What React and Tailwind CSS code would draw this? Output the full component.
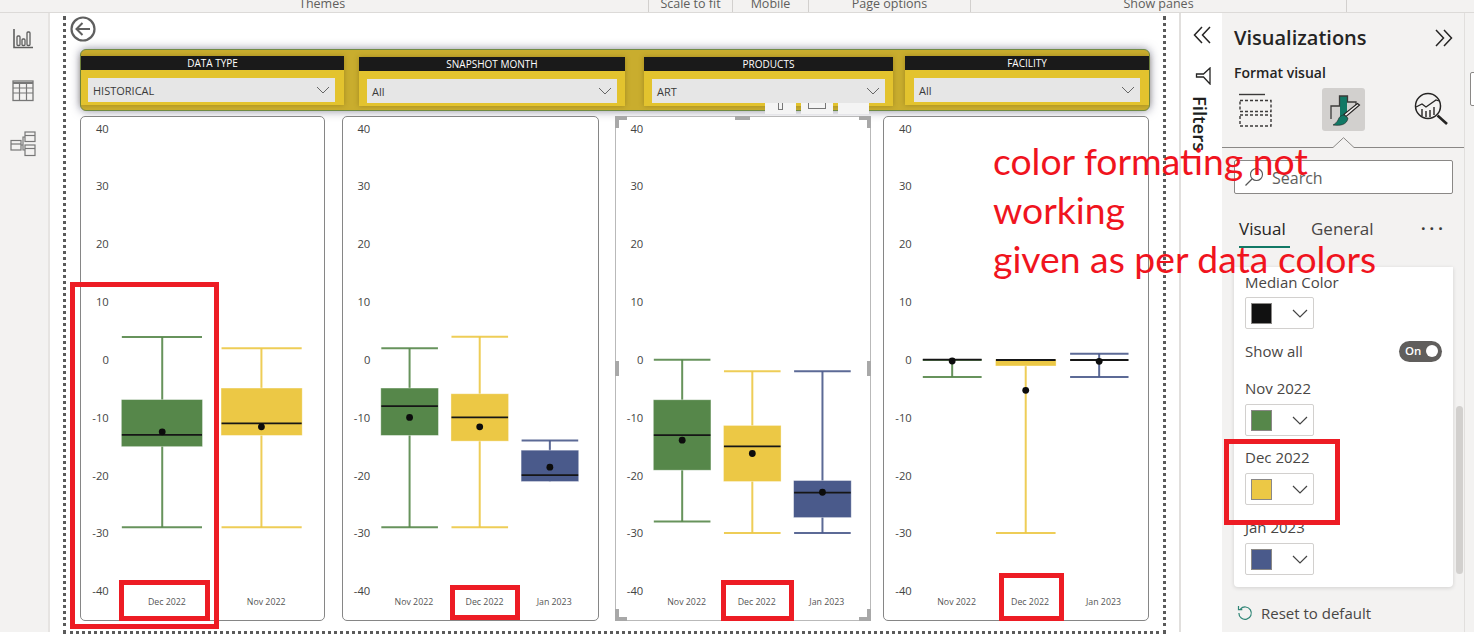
import React from "react";

const GREEN = "#56874a";
const YELLOW = "#ecc845";
const BLUE = "#4a5a8b";

const Y_TICKS = [40, 30, 20, 10, 0, -10, -20, -30, -40];
const yOf = (v) => 359.5 - v * 5.77;

const PANELS = [
  {
    x: 80, w: 245, axisX: 109,
    items: [
      { c: GREEN, cx: 162.3, x1: 122, x2: 202, top: 337, bottom: 527, b1: 399.5, b2: 446.5, med: 434.7, dot: 431.7, label: "Dec 2022", lx: 167 },
      { c: YELLOW, cx: 261.3, x1: 221.5, x2: 301.5, top: 348.3, bottom: 527, b1: 388, b2: 435.3, med: 423.3, dot: 426.7, label: "Nov 2022", lx: 266 },
    ],
  },
  {
    x: 342, w: 257, axisX: 370.5,
    items: [
      { c: GREEN, cx: 409.7, x1: 381.5, x2: 438, top: 348.3, bottom: 527, b1: 388, b2: 435.3, med: 406, dot: 417.3, label: "Nov 2022", lx: 414 },
      { c: YELLOW, cx: 479.7, x1: 451.5, x2: 508, top: 336.7, bottom: 527, b1: 393.7, b2: 441, med: 417.3, dot: 426.7, label: "Dec 2022", lx: 484.5 },
      { c: BLUE, cx: 549.7, x1: 521.5, x2: 578, top: 440.3, b1: 450, b2: 481.3, med: 475, dot: 467, label: "Jan 2023", lx: 554 },
    ],
  },
  {
    x: 615, w: 256, axisX: 643.5, selected: true,
    items: [
      { c: GREEN, cx: 682.3, x1: 654, x2: 710.5, top: 359.7, bottom: 521.3, b1: 399.7, b2: 470, med: 435, dot: 440, label: "Nov 2022", lx: 686.7 },
      { c: YELLOW, cx: 752.3, x1: 724, x2: 780.5, top: 371.3, bottom: 532.7, b1: 425.3, b2: 481.3, med: 446.3, dot: 453.3, label: "Dec 2022", lx: 756.7 },
      { c: BLUE, cx: 822.3, x1: 794, x2: 850.5, top: 371.3, bottom: 532.7, b1: 480.3, b2: 517.3, med: 492.3, dot: 492, label: "Jan 2023", lx: 826.7 },
    ],
  },
  {
    x: 883, w: 266, axisX: 912,
    items: [
      { c: GREEN, cx: 952.3, x1: 923, x2: 981.7, top: 360, bottom: 377, med: 359.7, dot: 361, label: "Nov 2022", lx: 956.7 },
      { c: YELLOW, cx: 1025.7, x1: 996, x2: 1055.5, top: 360, bottom: 532.7, b1: 359.3, b2: 366, med: 360, dot: 390.3, label: "Dec 2022", lx: 1030 },
      { c: BLUE, cx: 1099, x1: 1070, x2: 1128.3, top: 353.7, bottom: 377, med: 360, dot: 361.3, label: "Jan 2023", lx: 1103.3 },
    ],
  },
];

function Box({ d }) {
  const hasBox = d.b1 !== undefined;
  const low = d.bottom ?? d.b2;
  return (
    <g>
      <line x1={d.cx} x2={d.cx} y1={d.top} y2={low} stroke={d.c} strokeWidth="2" strokeOpacity="0.9" />
      <line x1={d.x1} x2={d.x2} y1={d.top} y2={d.top} stroke={d.c} strokeWidth="2" strokeOpacity="0.9" />
      {d.bottom !== undefined && <line x1={d.x1} x2={d.x2} y1={d.bottom} y2={d.bottom} stroke={d.c} strokeWidth="2" strokeOpacity="0.9" />}
      {hasBox && (
        <rect x={d.x1 - 0.5} y={d.b1} width={d.x2 - d.x1 + 1} height={d.b2 - d.b1} fill={d.c} stroke="#fff" strokeOpacity="0.45" strokeWidth="0.8" />
      )}
      <line x1={d.x1} x2={d.x2} y1={d.med} y2={d.med} stroke="#161616" strokeWidth="1.8" />
      <circle cx={d.cx} cy={d.dot} r="3.4" fill="#0c0c0c" />
      <text x={d.lx} y="605" textAnchor="middle" fontSize="8.8" fill="#555" fontFamily="'Open Sans', sans-serif">
        {d.label}
      </text>
    </g>
  );
}

function ChartPanel({ p }) {
  const border = p.selected ? "border-[#b9b9b9]" : "border-[#868686]";
  return (
    <div className={`relative box-border h-[505px] shrink-0 rounded-[5px] border-[1.5px] bg-white ${border}`} style={{ width: p.w }}>
      <svg className="block h-full w-full" viewBox={`${p.x + 1.5} 117.5 ${p.w - 3} 502`}>
        {Y_TICKS.map((t) => (
          <text key={t} x={p.axisX} y={yOf(t) + 4.4} textAnchor="end" fontSize="11.2" fill="#444" fontFamily="'Open Sans', sans-serif">
            {t}
          </text>
        ))}
        {p.items.map((d) => (
          <Box key={d.label} d={d} />
        ))}
      </svg>
    </div>
  );
}

function Slicer({ title, value, className, ddClass = "mx-2" }) {
  return (
    <div className={`shrink-0 bg-[#e3c32e] pb-[3px] shadow-[0_0_5px_rgba(90,70,0,0.35)] ${className}`}>
      <div className="flex h-[14px] items-center justify-center bg-[#1a1a1a] text-[10px] leading-none text-white">{title}</div>
      <div className={`mt-2 flex h-[24px] items-center justify-between bg-[#e6e6e6] pl-[5px] pr-[4px] text-[11px] text-[#3a3a3a] ${ddClass}`}>
        <span className="pt-[3px]">{value}</span>
        <svg width="14" height="8" viewBox="0 0 14 8" className="mr-[1px]">
          <polyline points="1,1 7,7 13,1" fill="none" stroke="#666" strokeWidth="1" />
        </svg>
      </div>
    </div>
  );
}

function ColorPicker({ color, className = "" }) {
  return (
    <div className={`flex h-[32px] w-[69px] items-center rounded-[2px] border border-[#d2d0ce] bg-white pl-[5px] ${className}`}>
      <div className="h-[21px] w-[21px] border border-[#8a8886]" style={{ background: color }} />
      <svg width="16" height="9" viewBox="0 0 16 9" className="ml-[20px]">
        <polyline points="1,1 8,8 15,1" fill="none" stroke="#444" strokeWidth="1.2" />
      </svg>
    </div>
  );
}

function RedBox({ className }) {
  return <div className={`pointer-events-none absolute box-border border-[5px] border-[#ed1c24] ${className}`} />;
}

function Handle({ className }) {
  return <div className={`absolute bg-[#a8a8a8] ${className}`} />;
}

export default function App() {
  return (
    <div className="relative h-[635px] w-[1474px] overflow-hidden bg-white text-[#252423] [font-family:'Open_Sans','Noto_Sans',sans-serif]">
      {/* ribbon remainder */}
      <div className="flex h-[13px] overflow-hidden border-b border-[#dcdad8] bg-[#f3f2f1] text-[12.5px] leading-[13px] text-[#605e5c]">
        <div className="w-[649px] shrink-0 border-r border-[#d2d0ce]"><div className="-mt-[3px] ml-[299px]">Themes</div></div>
        <div className="w-[84px] shrink-0 border-r border-[#d2d0ce] text-center"><div className="-mt-[3px]">Scale to fit</div></div>
        <div className="w-[76px] shrink-0 border-r border-[#d2d0ce] text-center"><div className="-mt-[3px]">Mobile</div></div>
        <div className="w-[162px] shrink-0 border-r border-[#d2d0ce] text-center"><div className="-mt-[3px]">Page options</div></div>
        <div className="w-[376px] shrink-0 border-r border-[#d2d0ce] text-center"><div className="-mt-[3px]">Show panes</div></div>
      </div>

      <div className="flex h-[619px]">
        {/* left rail */}
        <div className="flex w-[50px] shrink-0 flex-col items-start border-r-2 border-[#e6e4e2] bg-[#f3f2f1] text-[#666]">
          <svg width="24" height="24" viewBox="0 0 24 24" className="ml-[11px] mt-[13px]" fill="none" stroke="#5f5f5f">
            <path d="M3 3v18.5h19" strokeWidth="1.6" />
            <rect x="6" y="10" width="3" height="9.5" rx="1" strokeWidth="1.3" />
            <rect x="11" y="13" width="3" height="6.5" rx="1" strokeWidth="1.3" />
            <rect x="16" y="6" width="3" height="13.5" rx="1" strokeWidth="1.3" />
          </svg>
          <svg width="22" height="22" viewBox="0 0 22 22" className="ml-[12px] mt-[30px]" fill="none" stroke="#777">
            <rect x="1" y="1" width="20" height="19.5" strokeWidth="1.3" />
            <path d="M1 3h20" strokeWidth="2" />
            <path d="M1 8h20M1 13h20M7.5 3v17M14.5 3v17" strokeWidth="1.2" />
          </svg>
          <svg width="26" height="26" viewBox="0 0 26 26" className="ml-[10px] mt-[29px]" fill="none" stroke="#777" strokeWidth="1.2">
            <rect x="1" y="9.5" width="10" height="9.5" />
            <path d="M1 13h10" />
            <rect x="15" y="1" width="10" height="9.5" />
            <path d="M15 4.5h10" />
            <rect x="15" y="14" width="10" height="10.5" />
            <path d="M15 17.5h10" />
            <path d="M11 14h2V6h2M13 14v5h2" />
          </svg>
        </div>

        {/* canvas */}
        <div className="w-[1129px] shrink-0 bg-white">
          <div className="ml-[13px] box-border h-[618px] w-[1103px] border-[3px] border-t-0 border-dotted border-[#5a5a5a]">
            <svg width="26" height="26" viewBox="0 0 26 26" className="ml-[4px] mt-[3px] block" fill="none" stroke="#5f5f5f">
              <circle cx="13" cy="13" r="11.5" strokeWidth="2.2" />
              <path d="M20 13H6.5M12.5 7l-6 6 6 6" strokeWidth="2" />
            </svg>
            {/* slicer band */}
            <div className="ml-[14px] mt-[7px] box-border flex h-[62px] w-[1070px] items-start rounded-[6px] border border-[#718b45] bg-[#c9ad2e] pt-[6px] shadow-[0_0_10px_rgba(50,50,80,0.55)]">
              <Slicer title="DATA TYPE" value="HISTORICAL" className="w-[263px]" ddClass="ml-[7px] mr-[9px]" />
              <Slicer title="SNAPSHOT MONTH" value="All" className="ml-[15px] mt-[1px] w-[266px]" />
              <Slicer title="PRODUCTS" value="ART" className="ml-[19px] mt-[1px] w-[249px]" />
              <Slicer title="FACILITY" value="All" className="ml-[12px] w-[244px]" ddClass="ml-[9px] mr-[9px]" />
            </div>
            {/* charts */}
            <div className="ml-[14px] mt-[5px] flex">
              <ChartPanel p={PANELS[0]} />
              <div className="ml-[17px]"><ChartPanel p={PANELS[1]} /></div>
              <div className="relative ml-[16px]">
                <ChartPanel p={PANELS[2]} />
                <Handle className="left-0 top-0 h-[12px] w-[4px]" />
                <Handle className="left-0 top-0 h-[4px] w-[12px]" />
                <Handle className="right-0 top-0 h-[12px] w-[4px]" />
                <Handle className="right-0 top-0 h-[4px] w-[12px]" />
                <Handle className="bottom-0 left-0 h-[12px] w-[4px]" />
                <Handle className="bottom-0 left-0 h-[4px] w-[12px]" />
                <Handle className="bottom-0 right-0 h-[12px] w-[4px]" />
                <Handle className="bottom-0 right-0 h-[4px] w-[12px]" />
                <Handle className="left-[120px] top-0 h-[4px] w-[15px]" />
                <Handle className="bottom-0 left-[120px] h-[3px] w-[15px]" />
                <Handle className="left-0 top-[245px] h-[15px] w-[4px]" />
                <Handle className="right-0 top-[245px] h-[15px] w-[4px]" />
              </div>
              <div className="ml-[12px]"><ChartPanel p={PANELS[3]} /></div>
            </div>
          </div>
        </div>

        {/* filters pane */}
        <div className="box-border flex w-[43px] shrink-0 flex-col items-center border-l-2 border-[#e1dfdd] bg-white">
          <svg width="18" height="18" viewBox="0 0 18 18" className="mt-[13px]" fill="none" stroke="#252423" strokeWidth="1.5">
            <polyline points="9,1 1.5,9 9,17" />
            <polyline points="17,1 9.5,9 17,17" />
          </svg>
          <svg width="16" height="18" viewBox="0 0 16 18" className="ml-[2px] mt-[23px]" fill="none" stroke="#252423" strokeWidth="1.3">
            <path d="M15 1 8.5 7H1.5v3h7l6.5 7z" />
          </svg>
          <div className="mr-[4px] mt-[11px] text-[18.5px] font-semibold leading-[20px] text-[#201f1e] [writing-mode:vertical-rl]">Filters</div>
        </div>

        {/* visualizations pane */}
        <div className="relative box-border w-[242px] shrink-0 bg-[#f3f2f1] pt-[11px]">
          <div className="flex h-[28px] items-center justify-between pl-[12px] pr-[11px]">
            <span className="text-[20px] font-semibold leading-[28px] text-[#252423]">Visualizations</span>
            <svg width="18" height="18" viewBox="0 0 18 18" fill="none" stroke="#252423" strokeWidth="1.5">
              <polyline points="1,1 8.5,9 1,17" />
              <polyline points="9,1 16.5,9 9,17" />
            </svg>
          </div>
          <div className="ml-[12px] mt-[11px] text-[14px] font-semibold leading-[20px]">Format visual</div>
          <div className="mt-[5px] flex h-[43px] items-center">
            <svg width="34" height="34" viewBox="0 0 34 34" className="ml-[17px]" fill="none" stroke="#3b3a39">
              <path d="M0 1.5h26" strokeWidth="1.4" />
              <rect x="1" y="7.5" width="31" height="11" strokeWidth="1.4" strokeDasharray="3 2" />
              <rect x="1" y="22" width="31" height="11" strokeWidth="1.4" strokeDasharray="3 2" />
            </svg>
            <div className="ml-[49px] flex h-[43px] w-[43px] items-center justify-center rounded-[3px] bg-[#d2d0ce]">
              <svg width="43" height="43" viewBox="0 0 43 43">
                <polygon points="18,8 25,8 25,24 20,30 18,30" fill="#117865" />
                <path d="M9 31V18h8.5V8h8v6H34v6" fill="none" stroke="#3b3a39" strokeWidth="1.3" />
                <path d="M37.5 17 24 28.5l-2-2.2L35.5 15.5z" fill="#f3f2f1" stroke="#252423" strokeWidth="1.1" />
                <path d="M22 27c-3 0-5 2-6 5-1 2-3 4-5 5 7 1 14 0 15-7z" fill="#117865" stroke="#252423" strokeWidth="0.6" />
              </svg>
            </div>
            <svg width="36" height="36" viewBox="0 0 36 36" className="ml-[49px]" fill="none" stroke="#252423">
              <circle cx="14" cy="14" r="12.5" strokeWidth="1.5" />
              <path d="M2 15l6-3 4 3 10-7 3 1" strokeWidth="1.3" />
              <path d="M8 17v7M12 19v6M16 18v7M20 15v8" strokeWidth="1.4" />
              <path d="M23.5 23.5 33 32" strokeWidth="2.6" />
            </svg>
          </div>
          <svg width="242" height="11" viewBox="0 0 242 11" className="mt-[6px] block" fill="none" stroke="#8a8886">
            <polyline points="0,10.5 111,10.5 121.5,0.7 132,10.5 242,10.5" strokeWidth="1" />
          </svg>
          {/* search */}
          <div className="ml-[12px] mt-[12px] flex h-[34px] w-[219px] items-center rounded-[2px] border border-[#8a8886] bg-white pl-[9px]">
            <svg width="20" height="20" viewBox="0 0 20 20" fill="none" stroke="#555">
              <circle cx="12.5" cy="7.5" r="6" strokeWidth="1.1" />
              <path d="M8 12 1.5 18.5" strokeWidth="1.3" />
            </svg>
            <span className="ml-[8px] pt-[2px] text-[16px] text-[#605e5c]">Search</span>
          </div>
          {/* tabs */}
          <div className="mt-[23px] flex items-start pl-[17px]">
            <div className="w-[51px] whitespace-nowrap border-b-2 border-[#117865] pb-[5px] text-[17px] font-medium leading-[24px] text-[#252423]">Visual</div>
            <div className="ml-[21px] w-[63px] whitespace-nowrap text-[17px] leading-[24px] text-[#484644]">General</div>
            <div className="ml-[47px] text-[16px] font-bold leading-[22px] tracking-[4px] text-[#3b3a39]">···</div>
          </div>
          {/* card */}
          <div className="ml-[12px] mt-[19px] box-border h-[320px] w-[219px] rounded-b-[4px] bg-white pl-[11px] pr-[11px] pt-[5px] text-[15px] leading-[20px] text-[#484644] shadow-[0_1px_4px_rgba(0,0,0,0.14)]">
            <div>Median Color</div>
            <ColorPicker color="#111111" className="mt-[5px]" />
            <div className="mt-[11px] flex h-[22px] items-center justify-between">
              <span>Show all</span>
              <div className="flex h-[21px] w-[43px] items-center justify-between rounded-full bg-[#605e5c] pl-[6px] pr-[4px] text-[11.5px] font-semibold text-white">
                <span>On</span>
                <span className="h-[12px] w-[12px] rounded-full bg-white" />
              </div>
            </div>
            <div className="mt-[16px]">Nov 2022</div>
            <ColorPicker color={GREEN} className="mt-[6px]" />
            <div className="mt-[11px]">Dec 2022</div>
            <ColorPicker color={YELLOW} className="mt-[6px]" />
            <div className="mt-[12px]">Jan 2023</div>
            <ColorPicker color={BLUE} className="mt-[6px]" />
          </div>
          {/* reset */}
          <div className="ml-[15px] mt-[16px] flex h-[20px] items-center text-[15px] text-[#484644]">
            <svg width="16" height="16" viewBox="0 0 16 16" fill="none" stroke="#2f8576" strokeWidth="1.2">
              <path d="M3.5 4a6.2 6.2 0 1 1-1.6 4" />
              <path d="M1.5 1v3.6h3.8" />
            </svg>
            <span className="ml-[8px]">Reset to default</span>
          </div>
          {/* scrollbar */}
          <div className="absolute left-[234px] top-[393px] h-[168px] w-[7px] rounded-full bg-[#d2d0ce]" />
        </div>

        {/* right strip */}
        <div className="box-border flex-1 border-l border-[#e1dfdd] bg-[#f3f2f1] pt-[59px]">
          <div className="ml-[5px] h-[34px] w-[6px] rounded-l-[2px] border border-[#8a8886] bg-white" />
        </div>
      </div>

      {/* visual header tabs overlapping the slicer band */}
      <div className="absolute left-[765px] top-[103px] flex h-[11px] gap-[5px]">
        <div className="flex h-full w-[31px] justify-center bg-[#f4f4f4]"><div className="h-[7px] w-[5px] border border-t-0 border-[#777]" /></div>
        <div className="flex h-full w-[32px] justify-center bg-[#f4f4f4]"><div className="h-[6px] w-[18px] border border-t-0 border-[#777]" /></div>
        <div className="h-full w-[31px] bg-[#f4f4f4]" />
      </div>

      {/* annotations */}
      <RedBox className="left-[70px] top-[282px] h-[347px] w-[149px]" />
      <RedBox className="left-[119px] top-[580px] h-[41px] w-[91px]" />
      <RedBox className="left-[450px] top-[585px] h-[35px] w-[70px]" />
      <RedBox className="left-[721px] top-[580px] h-[41px] w-[73px]" />
      <RedBox className="left-[999px] top-[573px] h-[48px] w-[65px]" />
      <RedBox className="left-[1224px] top-[439px] h-[86px] w-[116px]" />
      <div className="pointer-events-none absolute left-[993px] top-[136px] whitespace-pre text-[37.3px] leading-[49px] text-[#f0141e] [font-family:Lato,sans-serif]">
        {"color formating not\nworking\ngiven as per data colors"}
      </div>
    </div>
  );
}
